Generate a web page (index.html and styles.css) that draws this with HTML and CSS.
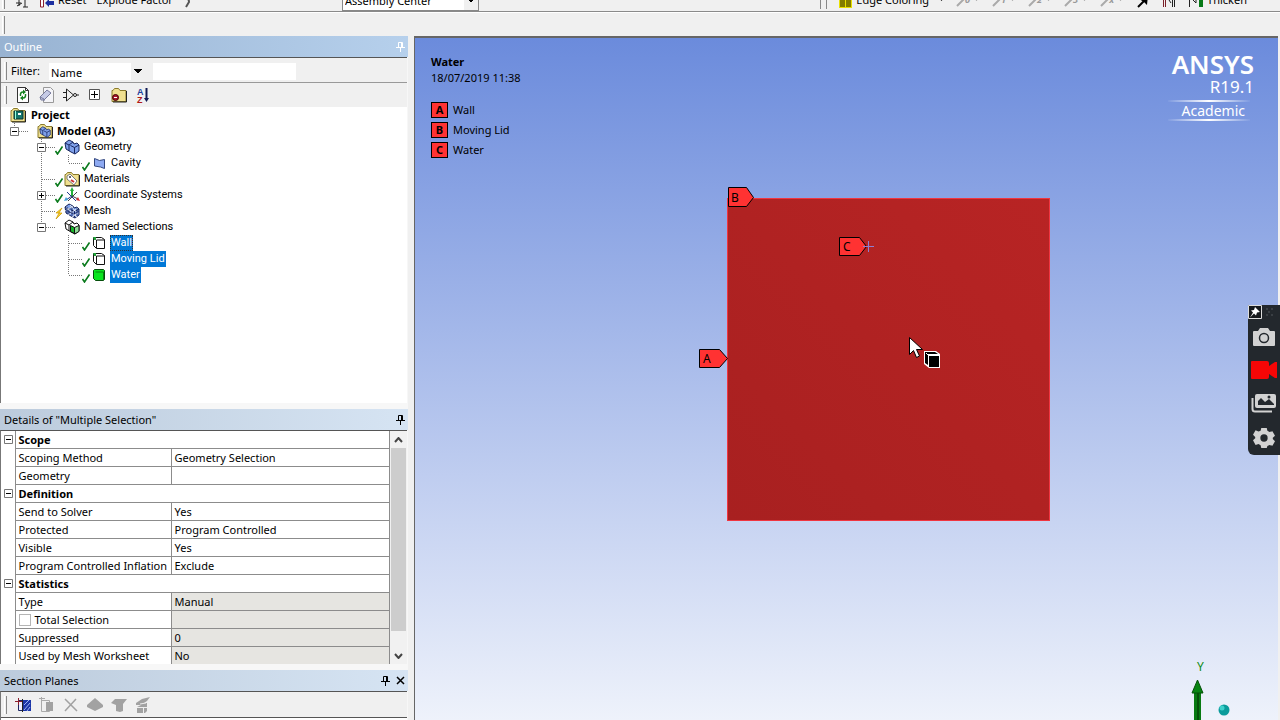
FILE: index.html
```html
<!DOCTYPE html>
<html lang="en">
<head>
  <meta charset="UTF-8">
  <title>Mechanical - Named Selections</title>
  <link rel="stylesheet" href="styles.css">
</head>
<body>
  <!-- shared icons -->
  <svg class="defs" width="0" height="0" aria-hidden="true">
    <symbol id="pin" viewBox="0 0 9 11"><path d="M2.500 6V1.500h4V6M0 6.500h9M4.500 7v4M5.500 1v5" fill="none" stroke="currentColor"/></symbol>
    <symbol id="twig" viewBox="0 0 27 16"><path d="M5 8.500h14" stroke="#777" stroke-dasharray="1 1"/></symbol>
    <symbol id="minus" viewBox="0 0 9 9"><path d="M.5.5h8v8h-8z" fill="#fff" stroke="#777"/><path d="M2 4.500h5" stroke="#000"/></symbol>
    <symbol id="plus" viewBox="0 0 9 9"><path d="M.5.5h8v8h-8z" fill="#fff" stroke="#777"/><path d="M2 4.500h5M4.500 2v5" stroke="#000"/></symbol>
    <symbol id="check" viewBox="0 0 8 9"><path d="M.5 5l2 3L7.500.5" fill="none" stroke="#0a7a1c" stroke-width="1.600"/></symbol>
    <symbol id="folder" viewBox="0 0 16 16"><path d="M1 3.500h1l1.500-2h4l1.500 2h6v11H1z" fill="#f0e090" stroke="#8a7a2a"/><path d="M15.500 4v11H2" fill="none" stroke="#222"/></symbol>
    <symbol id="cube" viewBox="0 0 16 16"><path d="M1 4l4-3 4 2 1 2 3-1 2 2v6l-4 3-4-2-5-3z" fill="#7fa0ea" stroke="#17265f"/><path d="M1 4l4 2v6M5 6l4-3M6.500 6.500l4 2v6M10.500 8.500L15 6" fill="none" stroke="#17265f"/></symbol>
    <symbol id="box" viewBox="0 0 16 16"><path d="M2.500 2.500h8l3 2v9h-8l-3-3z" fill="#fff" stroke="#111"/><path d="M5.500 5h8M5.500 5v8" fill="none" stroke="#111"/><path d="M2 2h3v3H3z" fill="#23a13a"/></symbol>
    <symbol id="edge" viewBox="0 0 14 14"><path d="M1 13L12 2M8 2h4v4" fill="none" stroke="#aaa" stroke-width="2"/></symbol>
    <symbol id="caret" viewBox="0 0 7 4"><path d="M0 0h7L3.500 4z" fill="currentColor"/></symbol>
  </svg>

  <div class="app">
    <header class="toolbars">
      <div class="toolbar toolbar-main">
        <div class="tool-group group-explode">
          <span class="grip"></span>
          <svg width="14" height="16"><path d="M1 11h5M2 14l5-3M4 8v6M10 6v9M8 7l2-2 2 2M8 15h5" fill="none" stroke="#222"/></svg>
          <button class="tool-btn" type="button"><svg width="15" height="16"><path d="M1.500 4v11h3V4" fill="#fff" stroke="#8c1f2d"/><path d="M6 11l4-4v2h5v4h-5v2z" fill="#1d2fa0"/></svg>Reset</button>
          <span class="tool-text">Explode Factor</span>
          <svg width="7" height="16"><path d="M1 4q5 2 5 6l-3 5" fill="none" stroke="#555" stroke-width="2"/></svg>
        </div>
        <div class="tool-group group-center">
          <select class="combo" aria-label="Explode origin"><option>Assembly Center</option></select>
        </div>
        <div class="tool-group group-edges">
          <span class="grip double"></span>
          <button class="tool-btn" type="button"><svg width="13" height="16"><path d="M0 0h13v16H0z" fill="#e8e000"/><path d="M1 1h5v6H1zM7 1h5v6H7zM1 8h5v7H1zM7 8h5v7H7z" fill="#827c00"/></svg>Edge Coloring<svg class="caret" width="5" height="3"><use href="#caret"/></svg></button>
          <button class="edge-btn" type="button"><svg width="14" height="14"><use href="#edge"/></svg><i>0</i><svg width="5" height="3"><use href="#caret"/></svg></button>
          <button class="edge-btn" type="button"><svg width="14" height="14"><use href="#edge"/></svg><i>1</i><svg width="5" height="3"><use href="#caret"/></svg></button>
          <button class="edge-btn" type="button"><svg width="14" height="14"><use href="#edge"/></svg><i>2</i><svg width="5" height="3"><use href="#caret"/></svg></button>
          <button class="edge-btn" type="button"><svg width="14" height="14"><use href="#edge"/></svg><i>3</i><svg width="5" height="3"><use href="#caret"/></svg></button>
          <button class="edge-btn" type="button"><svg width="14" height="14"><use href="#edge"/></svg><i>x</i><svg width="5" height="3"><use href="#caret"/></svg></button>
          <button class="tool-btn" type="button" aria-label="Show direction"><svg width="14" height="16"><path d="M2 15l6-6" stroke="#000" stroke-width="2"/><path d="M3 7l9-4-1 10-3-3z" fill="#000"/></svg></button>
          <button class="tool-btn" type="button" aria-label="Show vertices"><svg width="14" height="16"><path d="M1.500 5v10M3.500 5v10" stroke="#7a2029"/><path d="M10.500 8v7M12.500 8v7M7 8l2 3" stroke="#222"/></svg></button>
          <button class="tool-btn btn-thicken" type="button"><svg width="15" height="16"><path d="M1.500 4v11M5 8l3 3V5" fill="none" stroke="#222"/><path d="M11 4h4v11h-4z" fill="#087a18"/></svg>Thicken</button>
        </div>
      </div>
      <div class="toolbar toolbar-empty"><span class="grip"></span></div>
    </header>

    <div class="workspace">
      <aside class="sidebar">
        <section class="panel outline">
          <h2 class="panel-title active">Outline
            <button class="icon-btn" type="button" aria-label="Pin outline"><svg width="9" height="11"><use href="#pin"/></svg></button>
          </h2>
          <div class="panel-body">
            <div class="filter-bar">
              <span class="grip"></span>
              <label for="filter-type">Filter:</label>
              <select id="filter-type" class="combo"><option>Name</option></select>
              <input class="filter-text" type="text" aria-label="Filter text">
            </div>
            <div class="icon-bar outline-icons">
              <span class="grip"></span>
              <button class="icon-btn" type="button" aria-label="Refresh"><svg width="16" height="16"><path d="M2.500.5h8l3 3v12h-11z" fill="#fff" stroke="#333"/><path d="M10.500.5v3h3" fill="none" stroke="#333"/><path d="M5.500 9q-.5-4 2.500-4M10.500 7q.5 4-2.500 4" fill="none" stroke="#15821f" stroke-width="1.500"/><path d="M8 2.500l3 2.500-3 2.500zM8 8.500v5L5 11z" fill="#15821f"/></svg></button>
              <button class="icon-btn" type="button" aria-label="Clear"><svg width="16" height="16"><path d="M4.500.5h7l3 3v12h-10z" fill="#f4f4f8" stroke="#999"/><path d="M1 10l7-7 4 3-7 7H2z" fill="#c6cbe6" stroke="#777a9c"/><path d="M1 10l4 2v2" fill="none" stroke="#777a9c"/></svg></button>
              <button class="icon-btn" type="button" aria-label="Filter"><svg width="16" height="16"><path d="M3.500 2v12l7-6zM0 5.500h3M0 10.500h3M13 8h3" fill="none" stroke="#222"/><circle cx="12" cy="8" r="1.500" fill="#fff" stroke="#222"/></svg></button>
              <button class="icon-btn" type="button" aria-label="Expand all"><svg width="16" height="16"><path d="M2.500 2.500h10v10h-10z" fill="#fff" stroke="#555"/><path d="M4 7.500h7M7.500 4v7" stroke="#000"/></svg></button>
              <button class="icon-btn" type="button" aria-label="Hide folders"><svg width="16" height="16"><use href="#folder"/><circle cx="4.500" cy="10.500" r="3" fill="#a5182b" stroke="#400"/><path d="M3 10.500h3" stroke="#fff"/></svg></button>
              <button class="icon-btn" type="button" aria-label="Sort"><svg width="16" height="16"><path d="M11.500 1v11" stroke="#111a55" stroke-width="2"/><path d="M9 11h5l-2.500 4z" fill="#111a55"/><text class="sort-a" x="2" y="8">A</text><text class="sort-z" x="2" y="16">Z</text></svg></button>
            </div>

            <div class="tree">
              <div class="row root"><svg class="node" width="16" height="16"><use href="#folder"/><path d="M4 4h9v8H4z" fill="#14766c" stroke="#06302c"/><path d="M8 6h3v2H8z" fill="#fff"/><path d="M5.500 4v8" stroke="#9fd"/></svg><b>Project</b></div>
              <ul>
                <li>
                  <div class="row"><svg class="stem" width="27" height="16"><use href="#twig"/><use href="#minus" y="4" width="9" height="9"/></svg><svg class="node" width="16" height="16"><use href="#folder"/><use href="#cube" x="2" y="3" width="12" height="12"/></svg><b>Model (A3)</b></div>
                  <ul>
                    <li>
                      <div class="row"><svg class="stem" width="27" height="16"><use href="#twig"/><use href="#minus" y="4" width="9" height="9"/><use href="#check" x="18" y="7" width="8" height="9"/></svg><svg class="node" width="16" height="16"><use href="#cube"/></svg><span>Geometry</span></div>
                      <ul>
                        <li><div class="row"><svg class="stem" width="27" height="16"><use href="#twig"/><use href="#check" x="18" y="7" width="8" height="9"/></svg><svg class="node" width="16" height="16"><path d="M3.500 3.500l5 2 5-1v9l-4-1.500-6-1z" fill="#8eaaf2" stroke="#33477f"/></svg><span>Cavity</span></div></li>
                      </ul>
                    </li>
                    <li><div class="row"><svg class="stem" width="27" height="16"><use href="#twig"/><use href="#check" x="18" y="7" width="8" height="9"/></svg><svg class="node" width="16" height="16"><use href="#folder"/><path d="M3 5l3-2 7 7-3 4-7-6z" fill="#fff" stroke="#777"/><circle cx="6" cy="6" r="1" fill="#333"/><path d="M7 9l3 2" stroke="#c33" stroke-width="2"/></svg><span>Materials</span></div></li>
                    <li><div class="row"><svg class="stem" width="27" height="16"><use href="#twig"/><use href="#plus" y="4" width="9" height="9"/><use href="#check" x="18" y="7" width="8" height="9"/></svg><svg class="node" width="16" height="16"><path d="M8 9V2" stroke="#25b13a" stroke-width="2"/><path d="M8 0l2 4H6z" fill="#25b13a"/><path d="M8 9l-6 4M3 5l9 9" stroke="#223a8c"/><path d="M0 14l2-4 2 3z" fill="#3fa3d8"/><path d="M8 9l6 3M13 5l-9 9" stroke="#444"/><path d="M16 14l-4-1 2-3z" fill="#d62d2d"/></svg><span>Coordinate Systems</span></div></li>
                    <li><div class="row"><svg class="stem" width="27" height="16"><use href="#twig"/><path d="M25 5l-6 5h3l-3 6 6-6h-3z" fill="#ffd42a" stroke="#c79500" stroke-width=".7"/></svg><svg class="node" width="16" height="16"><use href="#cube"/><path d="M1 8l8-5M2 4l11 10M4 12l10-7M6 2l8 9M8 14l6-4" stroke="#fff" stroke-width=".8"/><path d="M1 6l4 3 5 2 5-3M3 4v7M8 5v8M13 5v8" fill="none" stroke="#17265f" stroke-width=".8"/></svg><span>Mesh</span></div></li>
                    <li>
                      <div class="row"><svg class="stem" width="27" height="16"><use href="#twig"/><use href="#minus" y="4" width="9" height="9"/></svg><svg class="node" width="16" height="16"><path d="M1 4l4-3 4 2 1 2 3-1 2 2v6l-4 3-4-2-5-3z" fill="#fff" stroke="#111"/><path d="M6.500 6.500l4 2v6l-4-2z" fill="#16b52a" stroke="#111"/><path d="M10.500 8.500l4.500-2v6l-4.500 2.500z" fill="#8fdd96" stroke="#111"/><path d="M1 4l4 2v6M5 6l4-3" fill="none" stroke="#111"/></svg><span>Named Selections</span></div>
                      <ul>
                        <li><div class="row"><svg class="stem" width="27" height="16"><use href="#twig"/><use href="#check" x="18" y="7" width="8" height="9"/></svg><svg class="node" width="16" height="16"><use href="#box"/></svg><span class="selected focused">Wall</span></div></li>
                        <li><div class="row"><svg class="stem" width="27" height="16"><use href="#twig"/><use href="#check" x="18" y="7" width="8" height="9"/></svg><svg class="node" width="16" height="16"><use href="#box"/></svg><span class="selected">Moving Lid</span></div></li>
                        <li><div class="row"><svg class="stem" width="27" height="16"><use href="#twig"/><use href="#check" x="18" y="7" width="8" height="9"/></svg><svg class="node" width="16" height="16"><path d="M2.500 3.500l1-1h9l1 1v9l-1 1h-8l-2-2z" fill="#0be61f" stroke="#064d0c"/><path d="M4.500 5h8v8" fill="none" stroke="#08810f"/></svg><span class="selected">Water</span></div></li>
                      </ul>
                    </li>
                  </ul>
                </li>
              </ul>
            </div>
          </div>
        </section>

        <section class="panel details">
          <h2 class="panel-title">Details of "Multiple Selection"
            <button class="icon-btn" type="button" aria-label="Pin details"><svg width="9" height="11"><use href="#pin"/></svg></button>
          </h2>
          <div class="panel-body details-body">
            <table class="grid">
              <colgroup><col class="col-toggle"><col class="col-name"><col></colgroup>
              <tbody>
                <tr><td class="toggle"><svg width="9" height="9"><use href="#minus"/></svg></td><th colspan="2">Scope</th></tr>
                <tr><td class="toggle"></td><td>Scoping Method</td><td>Geometry Selection</td></tr>
                <tr><td class="toggle"></td><td>Geometry</td><td></td></tr>
                <tr><td class="toggle"><svg width="9" height="9"><use href="#minus"/></svg></td><th colspan="2">Definition</th></tr>
                <tr><td class="toggle"></td><td>Send to Solver</td><td>Yes</td></tr>
                <tr><td class="toggle"></td><td>Protected</td><td>Program Controlled</td></tr>
                <tr><td class="toggle"></td><td>Visible</td><td>Yes</td></tr>
                <tr><td class="toggle"></td><td>Program Controlled Inflation</td><td>Exclude</td></tr>
                <tr><td class="toggle"><svg width="9" height="9"><use href="#minus"/></svg></td><th colspan="2">Statistics</th></tr>
                <tr><td class="toggle"></td><td>Type</td><td class="readonly">Manual</td></tr>
                <tr><td class="toggle"></td><td><label class="check-label"><input type="checkbox">Total Selection</label></td><td class="readonly"></td></tr>
                <tr><td class="toggle"></td><td>Suppressed</td><td class="readonly">0</td></tr>
                <tr><td class="toggle"></td><td>Used by Mesh Worksheet</td><td class="readonly">No</td></tr>
              </tbody>
            </table>
            <div class="scrollbar">
              <button class="icon-btn" type="button" aria-label="Scroll up"><svg width="9" height="6"><path d="M1 5l3.500-4L8 5" fill="none" stroke="#444" stroke-width="2"/></svg></button>
              <div class="track"><div class="thumb"></div></div>
              <button class="icon-btn" type="button" aria-label="Scroll down"><svg width="9" height="6"><path d="M1 1l3.500 4L8 1" fill="none" stroke="#444" stroke-width="2"/></svg></button>
            </div>
          </div>
        </section>

        <section class="panel planes">
          <h2 class="panel-title">Section Planes
            <button class="icon-btn" type="button" aria-label="Pin section planes"><svg width="9" height="11"><use href="#pin"/></svg></button>
            <button class="icon-btn" type="button" aria-label="Close"><svg width="9" height="9"><path d="M1 1l7 7M8 1L1 8" stroke="#000" stroke-width="1.500"/></svg></button>
          </h2>
          <div class="panel-body">
            <div class="icon-bar plane-icons">
              <span class="grip"></span>
              <button class="icon-btn" type="button" aria-label="New section plane"><svg width="16" height="16"><path d="M3.500 3.500h12v10h-12z" fill="#eef" stroke="#1a2560"/><path d="M8 3h8v11H8z" fill="#1b35a8"/><path d="M9 8l5-5M9 13l6-7M12 14l3-4" stroke="#9db2f2"/><path d="M0 4.500h7M3.500 1v7" stroke="#8c1f2d"/><path d="M7.500 2v13" stroke="#222"/></svg></button>
              <button class="icon-btn" type="button" aria-label="Edit section plane"><svg width="16" height="16"><path d="M2.500 3.500h8v11h-8z" fill="none" stroke="#aaa"/><path d="M7 5h7v9H7z" fill="#a2a2a2"/><path d="M0 1.500h6M2.500 0v5" stroke="#aaa"/></svg></button>
              <button class="icon-btn" type="button" aria-label="Delete section plane"><svg width="16" height="16"><path d="M2 2l12 12M13 2L2 14" stroke="#a2a2a2" stroke-width="1.500"/></svg></button>
              <button class="icon-btn" type="button" aria-label="Show whole elements"><svg width="16" height="16"><path d="M8 1l8 7v2l-8 4-8-4V8z" fill="#a2a2a2"/></svg></button>
              <button class="icon-btn" type="button" aria-label="Show capping faces"><svg width="16" height="16"><path d="M0 6l4-4h12l-4 5v7l-3 1-4-1V8z" fill="#a2a2a2"/></svg></button>
              <button class="icon-btn" type="button" aria-label="Show section"><svg width="16" height="16"><path d="M1 6l6-4 8-2-3 4-3 2h3v8l-2 2H2v-6l4-2H1z" fill="#a2a2a2"/><path d="M2 10.500h10M8.500 10v6M5 7l6-1" stroke="#eee"/></svg></button>
            </div>
            <div class="plane-list"></div>
          </div>
        </section>
      </aside>

      <main class="viewport">
        <div class="legend">
          <h1>Water</h1>
          <time>18/07/2019 11:38</time>
          <ul>
            <li><b>A</b>Wall</li>
            <li><b>B</b>Moving Lid</li>
            <li><b>C</b>Water</li>
          </ul>
        </div>
        <div class="brand">
          <strong>ANSYS</strong>
          <span class="release">R19.1</span>
          <span class="license">Academic</span>
        </div>

        <!-- model and its annotations -->
        <div class="face"></div>
        <div class="tag tag-a"><svg width="29" height="20"><path d="M.5.5h20l8 9-8 9H.5z" fill="#ff3232" stroke="#000"/><text x="4" y="14">A</text></svg></div>
        <div class="tag tag-b"><svg width="27" height="20"><path d="M.5.5h18l7 10-7 9H.5z" fill="#ff3232" stroke="#000"/><text x="3" y="15">B</text></svg></div>
        <div class="tag tag-c"><svg width="35" height="20"><path d="M.5.5h20l7 9-7 9H.5z" fill="#ff3232" stroke="#000"/><path d="M24 9.500h11M29.500 4v11" stroke="#8f7fd0"/><text x="4" y="14">C</text></svg></div>
        <svg class="cursor" width="34" height="34"><path d="M.5.5v17l4-4 3 7 3-1.500-3-6.500h6z" fill="#fff" stroke="#000"/><path d="M15 14h12l4 3v14H20l-5-4z" fill="#fff"/><path d="M16 15h10l3 2H19v11l-3-2z" fill="#000"/><path d="M17 16l3 3" stroke="#fff"/><path d="M20 19h10v11H20z" fill="#000"/></svg>
        <svg class="triad" width="50" height="60"><text x="11" y="11">Y</text><path d="M8 30h7v30H8z" fill="#087a12"/><path d="M12 30v30" stroke="#055009" stroke-width="2"/><path d="M11.500 20L17 33H6z" fill="#078512" stroke="#055009"/><circle cx="38" cy="50" r="5.500" fill="#0a9b9b"/><circle cx="36" cy="48" r="2.500" fill="#3fd0cc"/></svg>
      </main>
    </div>

    <div class="recorder">
      <svg class="rec-pin" width="32" height="14"><path d="M.5.500h13v13H.5z" fill="#15181b" stroke="#ddd"/><path d="M7 2l5 5-3 .5-1 3-2-2-4 4 3-5-2-2 3-.5z" fill="#fff"/><path d="M18 4h2M23 4h2M18 10h2M23 10h2M20 7h2" stroke="#3a3f44" stroke-width="2"/></svg>
      <button class="icon-btn" type="button" aria-label="Screenshot"><svg width="24" height="20"><path d="M2 4h4l2-3h8l2 3h4q1 0 1 1v13q0 1-1 1H2q-1 0-1-1V5q0-1 1-1z" fill="#d2d2d2"/><circle cx="12" cy="11" r="4.500" fill="#d2d2d2" stroke="#23282d" stroke-width="1.500"/></svg></button>
      <button class="icon-btn" type="button" aria-label="Record video"><svg width="26" height="18"><path d="M1 0h15q2 0 2 2v3l6-4h2v16h-2l-6-4v3q0 2-2 2H1q-1 0-1-1V1q0-1 1-1z" fill="#f60606"/></svg></button>
      <button class="icon-btn" type="button" aria-label="Gallery"><svg width="26" height="20"><path d="M6 1h17q2 0 2 2v10q0 2-2 2H6q-2 0-2-2V3q0-2 2-2z" fill="#d2d2d2"/><path d="M7 12V8l3-3 4 4 4-3 5 5v1z" fill="#23282d"/><circle cx="18" cy="4" r="1.500" fill="#23282d"/><path d="M1.500 5v11q0 2.500 2.500 2.500h17" fill="none" stroke="#d2d2d2" stroke-width="2"/></svg></button>
      <button class="icon-btn" type="button" aria-label="Settings"><svg width="22" height="22" viewBox="0 0 24 24"><path d="M9 1h6l.7 3.200 2.300 1.300 3.200-1 2.800 5-2.400 2.300v1.400l2.400 2.300-2.800 5-3.200-1-2.300 1.300L15 23H9l-.7-3.200L6 18.500l-3.200 1L0 14.500l2.400-2.300v-1.400L0 8.500l2.800-5 3.200 1.500 2.300-1z" fill="#d2d2d2"/><circle cx="12" cy="12" r="4" fill="#23282d"/></svg></button>
    </div>
  </div>
</body>
</html>
```

FILE: styles.css
```css
* {
  box-sizing: border-box;
}

body {
  margin: 0;
  font-family: "Noto Sans", "Open Sans", sans-serif;
  font-size: 11px;
  line-height: 16px;
  color: #000;
  background: #f0f0f0;
}

svg {
  display: block;
  flex: none;
}

button,
input,
select {
  font: inherit;
  color: inherit;
}

.defs {
  position: absolute;
}

.app {
  position: relative;
  display: flex;
  flex-direction: column;
  height: 100vh;
  overflow: hidden;
}

/* toolbars */
.toolbar {
  display: flex;
  align-items: center;
  height: 24px;
}

.toolbar-main {
  margin-top: -12px;
  border-bottom: 1px solid #8a8a8a;
}

.toolbar-empty {
  padding-left: 2px;
  border-top: 1px solid #fff;
}

.grip {
  flex: none;
  width: 3px;
  height: 18px;
  border-right: 1px solid #888;
  border-left: 1px solid #fff;
}

.grip.double {
  width: 7px;
  border-left: 1px solid #888;
}

.tool-group {
  display: flex;
  align-items: center;
  height: 24px;
}

.group-explode {
  gap: 10px;
  width: 342px;
  padding-left: 2px;
}

.group-center .combo {
  width: 137px;
  height: 22px;
  border: 1px solid #888;
}

.group-edges {
  gap: 12px;
  margin-left: auto;
  padding-right: 33px;
}

.tool-btn {
  display: flex;
  align-items: center;
  gap: 4px;
  padding: 0;
  border: none;
  background: none;
}

.tool-btn .caret {
  margin-left: 6px;
}

.edge-btn {
  display: flex;
  align-items: center;
  width: 24px;
  padding: 0;
  border: none;
  background: none;
  color: #999;
}

.edge-btn i {
  width: 5px;
  margin-left: -5px;
  font-weight: bold;
  font-size: 9px;
}

.edge-btn i + svg {
  margin-left: 4px;
}

.combo {
  padding: 2px 0 0 2px;
  border: none;
  border-radius: 0;
  appearance: none;
  background:
    conic-gradient(from -45deg at 50% 100%, #000 90deg, transparent 0) right 3px center / 8px 4px no-repeat,
    linear-gradient(#f0f0f0, #f0f0f0) right / 14px 100% no-repeat,
    #fff;
}

/* panels */
.workspace {
  display: flex;
  flex: 1;
  gap: 6px;
  min-height: 0;
}

.sidebar {
  display: flex;
  flex: none;
  flex-direction: column;
  gap: 6px;
  width: 408px;
  background: #f7f7f7;
}

.panel {
  display: flex;
  flex-direction: column;
}

.panel-title {
  display: flex;
  flex: none;
  align-items: center;
  gap: 6px;
  height: 21px;
  margin: 0;
  padding: 0 3px 0 4px;
  font-size: 11px;
  font-weight: normal;
  background: linear-gradient(90deg, #bccbdc, #d6e4f3);
}

.panel-title.active {
  color: #fff;
  background: linear-gradient(90deg, #98b3d2, #b6d0ec);
}

.panel-title .icon-btn:first-of-type {
  margin-left: auto;
}

.icon-btn {
  display: flex;
  align-items: center;
  justify-content: center;
  padding: 0;
  border: none;
  background: none;
}

.panel-body {
  display: flex;
  flex: 1;
  flex-direction: column;
  min-height: 0;
  margin-right: 1px;
  border-top: 1px solid #555;
  border-left: 1px solid #777;
  background: #f0f0f0;
}

.outline {
  flex: 1;
}

.filter-bar {
  display: flex;
  align-items: center;
  height: 25px;
  padding: 2px 0 0 3px;
  border-bottom: 1px solid #999;
}

.filter-bar label {
  margin: 0 9px 0 4px;
}

.filter-bar .combo {
  width: 96px;
  height: 17px;
}

.filter-text {
  width: 143px;
  height: 17px;
  margin-left: 8px;
  padding: 0 2px;
  border: none;
  background: #fff;
}

.icon-bar {
  display: flex;
  align-items: center;
  gap: 8px;
  height: 25px;
  padding-left: 3px;
}

.outline-icons {
  height: 24px;
}

/* tree */
.tree {
  flex: 1;
  padding-left: 9px;
  background: #fff;
  font-family: Roboto, "Noto Sans", sans-serif;
}

.tree b {
  font-family: "Noto Sans", sans-serif;
}

.tree ul {
  margin: 0;
  padding: 0;
  list-style: none;
}

.tree ul ul {
  padding-left: 27px;
}

.tree li {
  background: repeating-linear-gradient(#777 0 1px, transparent 1px 2px) 4px 0 / 1px 100% no-repeat;
}

.tree li:last-child {
  background-size: 1px 8px;
}

.row {
  display: flex;
  align-items: center;
  height: 16px;
  white-space: nowrap;
}

.row .node {
  margin-right: 3px;
}

.row span,
.row b {
  padding: 0 1px;
}

.row.root b {
  margin-left: 1px;
}

.row .selected {
  color: #fff;
  background: #0078d7;
}

.row .focused {
  outline: 1px dotted #333;
  outline-offset: -1px;
}

/* details */
.details {
  height: 255px;
}

.details-body {
  flex-direction: row;
  align-items: stretch;
  overflow: hidden;
  background: #fff;
}

.grid {
  flex: 1;
  align-self: flex-start;
  margin-top: -1px;
  border-collapse: collapse;
  table-layout: fixed;
}

.col-toggle {
  width: 14px;
}

.col-name {
  width: 156px;
}

.grid td,
.grid th {
  height: 18px;
  padding: 0 0 0 3px;
  border: 1px solid #8c8c8c;
  line-height: 16px;
  text-align: left;
  white-space: nowrap;
}

.grid .toggle {
  padding: 0 0 0 3px;
  border-width: 0 1px 0 0;
}

.grid .readonly {
  background: #e6e5e1;
}

.check-label {
  display: flex;
  align-items: center;
  gap: 4px;
}

.check-label input {
  width: 12px;
  height: 12px;
  margin: 0;
  border: 1px solid #b5b5b5;
  appearance: none;
  background: #fff;
}

.scrollbar {
  display: flex;
  flex: none;
  flex-direction: column;
  width: 17px;
  background: #f1f1f1;
}

.scrollbar .icon-btn {
  height: 17px;
}

.track {
  flex: 1;
}

.thumb {
  width: 15px;
  height: 92%;
  margin-left: 1px;
  background: #cdcdcd;
}

/* section planes */
.plane-list {
  height: 3px;
  border-top: 1px solid #555;
  background: #fff;
}

/* viewport */
.viewport {
  position: relative;
  display: flex;
  flex: 1;
  align-items: flex-start;
  justify-content: space-between;
  margin-right: 2px;
  padding: 12px 24px 0 16px;
  border-top: 2px solid #666;
  border-left: 1px solid #666;
  background: linear-gradient(#6b8bdc, #eef2fb);
}

.legend {
  margin-top: 4px;
}

.legend h1 {
  margin: 0;
  font-size: 11px;
  line-height: 16px;
}

.legend ul {
  display: grid;
  gap: 4px;
  margin: 16px 0 0;
  padding: 0;
  list-style: none;
}

.legend li {
  display: flex;
  gap: 5px;
}

.legend b {
  width: 17px;
  border: 1px solid #000;
  background: #ff3232;
  line-height: 14px;
  text-align: center;
}

.brand {
  display: flex;
  flex-direction: column;
  align-items: flex-end;
  color: #fff;
}

.brand strong {
  font-size: 26px;
  font-weight: 600;
  line-height: 28px;
}

.brand .release {
  font-size: 17px;
  line-height: 18px;
}

.brand .license {
  margin: 4px 4px 0 0;
  padding: 0 5px 0 14px;
  border-style: solid;
  border-width: 2px 0;
  border-image: linear-gradient(90deg, transparent, #fff, transparent) 2;
  font-size: 14px;
  line-height: 17px;
}

.face {
  position: absolute;
  top: 160px;
  left: 312px;
  width: 323px;
  height: 323px;
  border: 1px solid #f03540;
  background: linear-gradient(45deg, #a82020, #b82424) padding-box;
}

.tag {
  position: absolute;
  font-size: 12px;
}

.tag-a {
  top: 311px;
  left: 284px;
}

.tag-b {
  top: 149px;
  left: 313px;
}

.tag-c {
  top: 199px;
  left: 424px;
}

.cursor {
  position: absolute;
  top: 299px;
  left: 494px;
}

.triad {
  position: absolute;
  bottom: 0;
  left: 771px;
  font-size: 12px;
  fill: #0a8a14;
}

.sort-a,
.sort-z {
  font-family: "Liberation Sans", sans-serif;
  font-size: 9px;
  font-weight: bold;
  fill: #1c3f9c;
}

.sort-z {
  fill: #b01818;
}

/* screen recorder strip */
.recorder {
  position: absolute;
  top: 305px;
  right: 0;
  display: flex;
  flex-direction: column;
  align-items: center;
  gap: 14px;
  width: 32px;
  height: 150px;
  border-radius: 0 0 0 6px;
  background: #23282d;
}

.rec-pin {
  margin-bottom: -6px;
}
```
